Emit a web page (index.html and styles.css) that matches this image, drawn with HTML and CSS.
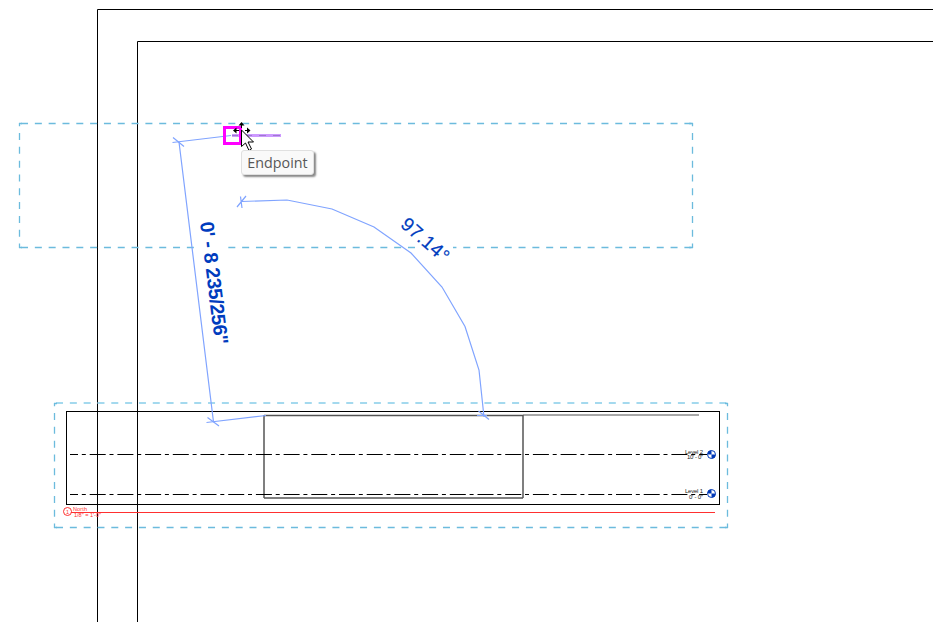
FILE: index.html
```
<!DOCTYPE html>
<html lang="en">
<head>
    <meta charset="utf-8">
    <title>Sheet view</title>
    <link rel="stylesheet" href="styles.css">
</head>
<body>
    <svg class="sheet" width="933" height="622" viewBox="0 0 933 622">
        <!-- title block -->
        <g class="edge">
            <path d="M97.5 622V9.5H933"/>
            <path d="M137.5 622V41.5H933"/>
        </g>

        <!-- elevation -->
        <rect class="edge" x="66.5" y="411.5" width="653" height="93"/>
        <path class="thin" d="M523 415H699"/>
        <g class="building">
            <path d="M264 415.5H523"/>
            <path d="M264 415V498"/>
            <path d="M523 415V498"/>
            <path d="M264 498H523"/>
        </g>
        <path class="level" d="M70 454.5H707"/>
        <path class="level" d="M70 494.5H707"/>
        <text class="level_text" x="685" y="454" textLength="18">Level 2</text>
        <text class="level_text" x="687" y="459" textLength="16">10' - 0"</text>
        <text class="level_text" x="685" y="493" textLength="18">Level 1</text>
        <text class="level_text" x="689" y="499" textLength="14">0' - 0"</text>
        <g class="level_head">
            <circle cx="711.5" cy="454.5" r="4"/>
            <path d="M711.5 454.5H707.5A4 4 0 0 1 711.5 450.5ZM711.5 454.5H715.5A4 4 0 0 1 711.5 458.5Z"/>
            <circle cx="711.5" cy="493.5" r="4"/>
            <path d="M711.5 493.5H707.5A4 4 0 0 1 711.5 489.5ZM711.5 493.5H715.5A4 4 0 0 1 711.5 497.5Z"/>
        </g>

        <!-- view title -->
        <g class="title">
            <path d="M71 512.5H715"/>
            <circle cx="67.5" cy="511.5" r="4"/>
            <text x="66" y="514">1</text>
            <text x="73" y="511" textLength="14">North</text>
            <text x="74" y="517" textLength="27">1/8" = 1'-0"</text>
        </g>

        <!-- viewport outlines -->
        <g class="viewport">
            <path stroke-dashoffset="11.8" d="M19 123.5H692"/>
            <path stroke-dashoffset="11.8" d="M19 247.5H692"/>
            <path stroke-dashoffset="3.8" d="M19.5 123V248"/>
            <path stroke-dashoffset="3.8" d="M692.5 123V248"/>
            <path class="corner" d="M19 123.5H22M19 247.5H22M689 123.5H693M689 247.5H693"/>
        </g>
        <g class="viewport">
            <path class="selected" stroke-dashoffset="11.8" d="M54 403H728"/>
            <path stroke-dashoffset="11.8" d="M54 527.5H728"/>
            <path stroke-dashoffset="3.8" d="M54.5 403V528"/>
            <path stroke-dashoffset="3.8" d="M727.5 403V528"/>
            <path class="corner" d="M54 403.5H57M54 527.5H57M725 403.5H728M725 527.5H728"/>
        </g>

        <!-- dimensions -->
        <rect class="mask" x="198" y="240" width="29" height="12"/>
        <rect class="mask" x="415" y="244" width="38" height="6"/>
        <g class="dim">
            <path d="M172.500 142.500L231 135.500M179 142L213.500 422M206.500 422.500L266 415.500"/>
            <path d="M173 137.500L184 146.500M207.500 417.500L219 426"/>
            <path d="M241.500 201.500L287 200L332 209L374 227L411 253L442 287L465 326.500L479 370L484 417"/>
            <path d="M237 207L246 196M240.500 196.500L242 208M478.500 411L489 419.500M477 415.500H487"/>
        </g>
        <text class="length" transform="translate(200 222.500) rotate(83)" textLength="123.500">0' - 8 235/256"</text>
        <text class="angle" transform="translate(399.500 226) rotate(41)" textLength="57">97.14°</text>

        <!-- snap marker -->
        <path class="line_glow" d="M232 135.500H281"/>
        <path class="line_dash" d="M232 135.500H281"/>
        <rect class="snap" x="224.500" y="127.500" width="16" height="16"/>
        <g class="move">
            <path d="M241.500 124V128M235 130.500H239M245 130.500H249"/>
            <path d="M241.500 122L244.500 125.500H238.500ZM233 130.500L236.500 127.500V133.500ZM250.500 130.500L247 127.500V133.500Z"/>
        </g>
        <path class="pointer" d="M241.500 130V146.500L245.500 143L249 150.500L251.500 149L248 142H253.500Z"/>
    </svg>
    <div class="tooltip">Endpoint</div>
</body>
</html>
```

FILE: styles.css
```
body {
    margin: 0;
    background: #fff;
    overflow: hidden;
}
.sheet {
    display: block;
    font-family: "Liberation Sans", Arial, sans-serif;
}
.edge {
    fill: none;
    stroke: #000;
}
.thin {
    stroke: #a8a8a8;
    stroke-width: 2;
}
.building {
    fill: none;
    stroke: #555;
    stroke-width: 1.5;
}
.level {
    stroke: #000;
    stroke-width: 1.2;
    stroke-dasharray: 16 3.8 4 3.9;
    stroke-dashoffset: 8;
}
.level_text {
    font-size: 6px;
    fill: #222;
}
.level_head circle {
    fill: #fff;
    stroke: #0038b8;
}
.level_head path {
    fill: #0038b8;
}
.title {
    font-size: 5.5px;
    fill: #ff3030;
}
.title path, .title circle {
    fill: none;
    stroke: #ff3030;
}
.viewport path {
    fill: none;
    stroke: #6cbbdd;
    stroke-width: 1.3;
    stroke-dasharray: 7 6.82;
}
.viewport .selected {
    stroke: #a4d9ee;
    stroke-width: 2;
}
.viewport .corner {
    stroke-dasharray: none;
}
.mask {
    fill: #fff;
}
.dim {
    fill: none;
    stroke: #80a4ff;
    stroke-width: 1.2;
}
.length {
    font-size: 19.5px;
    font-weight: bold;
    fill: #003cbe;
}
.angle {
    font-size: 19px;
    fill: #003cbe;
    stroke: #003cbe;
    stroke-width: 0.2;
}
.line_glow {
    stroke: #cc99ff;
    stroke-width: 3;
}
.line_dash {
    stroke: #9f78d0;
    stroke-dasharray: 7 7;
    stroke-dashoffset: 1;
}
.snap {
    fill: none;
    stroke: #f0f;
    stroke-width: 3;
}
.move {
    fill: #000;
    stroke: #000;
}
.move path + path {
    stroke: none;
}
.pointer {
    fill: #fff;
    stroke: #000;
}
.tooltip {
    position: absolute;
    left: 241px;
    top: 150px;
    box-sizing: border-box;
    width: 73px;
    height: 25px;
    border: 1px solid #e0e0e0;
    border-radius: 3px;
    background: #f9f9f9;
    box-shadow: 2px 2px 2px #888;
    color: #575757;
    font: 14.3px/23px "Open Sans", "Segoe UI", sans-serif;
    text-align: center;
}
```
